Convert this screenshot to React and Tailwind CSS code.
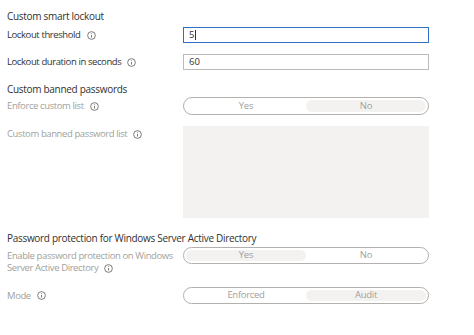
import React from 'react';

const Info = () => (
  <svg width="9" height="9" viewBox="0 0 10 10" className="ml-[6px] shrink-0">
    <circle cx="5" cy="5" r="4.3" fill="none" stroke="#605e5c" strokeWidth="0.9" />
    <line x1="5" y1="4.3" x2="5" y2="7.3" stroke="#605e5c" strokeWidth="0.9" />
    <circle cx="5" cy="2.9" r="0.55" fill="#605e5c" />
  </svg>
);

const Label = ({ children, muted, className = '' }) => (
  <div className={`w-[176px] shrink-0 whitespace-nowrap text-[9.5px] tracking-[-0.4px] leading-[12px] ${muted ? 'text-[#a19f9d]' : 'text-[#323130]'} ${className}`}>
    {children}
  </div>
);

const Toggle = ({ left, right, selected, height = 'h-[18px]' }) => (
  <div className={`w-[246px] ${height} rounded-full border border-[#b3b0ad] p-[2px] flex`}>
    {[left, right].map((t, i) => (
      <div
        key={t}
        className={`flex-1 rounded-full flex items-center justify-center text-[9.5px] tracking-[-0.3px] text-[#a19f9d] ${selected === i ? 'bg-[#f3f2f1]' : ''}`}
      >
        {t}
      </div>
    ))}
  </div>
);

const Heading = ({ children, className = '' }) => (
  <div className={`h-[14px] leading-[14px] text-[10px] tracking-[-0.3px] text-[#323130] ${className}`}>{children}</div>
);

export default function App() {
  return (
    <div className="w-[474px] h-[335px] bg-white pt-[9px] pl-[7px]" style={{ fontFamily: '"Open Sans", "Noto Sans", sans-serif' }}>
      <Heading>Custom smart lockout</Heading>

      <div className="mt-[4px] flex items-center">
        <Label className="flex items-center">Lockout threshold <Info /></Label>
        <div className="w-[246px] h-[16px] border border-[#2f6fc4] flex items-center pl-[5px] text-[9.5px] text-[#323130]">
          5<span className="w-px h-[10px] bg-[#323130] ml-px" />
        </div>
      </div>

      <div className="mt-[11px] flex items-center">
        <Label className="flex items-center">Lockout duration in seconds <Info /></Label>
        <div className="w-[246px] h-[16px] border border-[#bdbbb9] flex items-center pl-[5px] text-[9.5px] text-[#323130]">
          60
        </div>
      </div>

      <Heading className="mt-[12px]">Custom banned passwords</Heading>

      <div className="mt-[1px] flex items-center">
        <Label muted className="flex items-center">Enforce custom list <Info /></Label>
        <Toggle left="Yes" right="No" selected={1} />
      </div>

      <div className="mt-[11px] flex items-start">
        <Label muted className="flex items-center leading-[16px]">Custom banned password list <Info /></Label>
        <div className="w-[246px] h-[92px] bg-[#f3f2f1]" />
      </div>

      <Heading className="mt-[13px]">Password protection for Windows Server Active Directory</Heading>

      <div className="mt-[2px] flex items-start">
        <Label muted className="pt-[3px]">
          Enable password protection on Windows
          <br />
          <span className="inline-flex items-center">Server Active Directory <Info /></span>
        </Label>
        <Toggle left="Yes" right="No" selected={0} height="h-[17px]" />
      </div>

      <div className="mt-[13px] flex items-center">
        <Label muted className="flex items-center">Mode <Info /></Label>
        <Toggle left="Enforced" right="Audit" selected={1} height="h-[17px]" />
      </div>
    </div>
  );
}
